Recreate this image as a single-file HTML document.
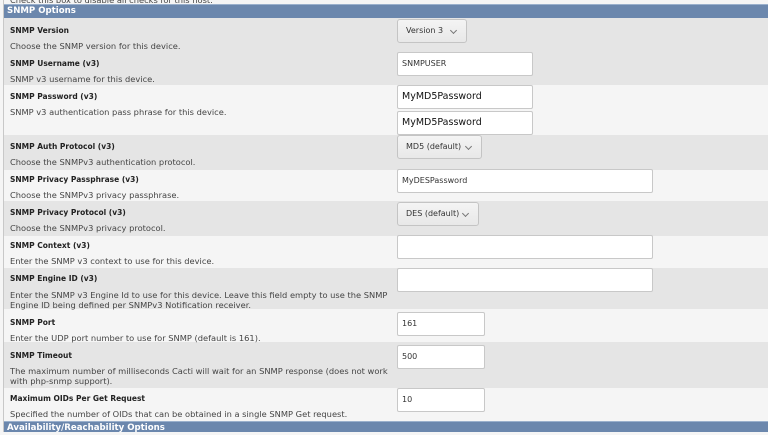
<!DOCTYPE html>
<html><head><meta charset="utf-8"><style>
*{margin:0;padding:0;box-sizing:border-box}
body{width:768px;height:432px;overflow:hidden;background:#f5f5f5;font-family:"DejaVu Sans","Liberation Sans",sans-serif;position:relative}
.lb{position:absolute;left:3px;top:0;width:1px;height:432px;background:#c8c8c8}
.r{position:absolute;left:4px;right:0}
.g{background:#e5e5e5}.w{background:#f5f5f5}
.h{background:#6b87ad;color:#fff;font-weight:bold;font-size:8.6px;padding-left:3px;line-height:13px;border-top:1px solid #9ab0cc}
.t{position:absolute;left:10px;font-size:7.5px;color:#222;white-space:nowrap}
.b{font-weight:bold}
.d{color:#444;line-height:10px;font-size:8.3px}
.i{position:absolute;left:397px;height:24px;background:#fff;border:1px solid #c8c8c8;border-radius:2px;font-size:8px;color:#333;padding-left:4px;line-height:22px}
.s{position:absolute;left:397px;height:24px;background:linear-gradient(#f4f4f4,#e8e8e8);border:1px solid #c4c4c4;border-radius:3px;font-size:8px;color:#333;padding-left:8px;line-height:22px}
.s:after{content:"";position:absolute;right:10px;top:8px;width:4px;height:4px;border-right:1px solid #777;border-bottom:1px solid #777;transform:rotate(45deg)}
.big{font-size:9.5px;color:#111}
</style></head><body>
<div class="t d" style="top:-5px;left:10px">Check this box to disable all checks for this host.</div>
<div class="r h" style="top:4px;height:14px">SNMP Options</div>
<div class="r g" style="top:18px;height:67px"></div>
<div class="r w" style="top:85px;height:50px"></div>
<div class="r g" style="top:135px;height:35px"></div>
<div class="r w" style="top:170px;height:31px"></div>
<div class="r g" style="top:201px;height:35px"></div>
<div class="r w" style="top:236px;height:32px"></div>
<div class="r g" style="top:268px;height:41px"></div>
<div class="r w" style="top:309px;height:33px"></div>
<div class="r g" style="top:342px;height:46px"></div>
<div class="r w" style="top:388px;height:33px"></div>
<div class="r h" style="top:421px;height:11px">Availability/Reachability Options</div>
<div class="lb"></div>

<div class="t b" style="top:26px">SNMP Version</div>
<div class="t d" style="top:41px">Choose the SNMP version for this device.</div>
<div class="t b" style="top:59px">SNMP Username (v3)</div>
<div class="t d" style="top:74px">SNMP v3 username for this device.</div>
<div class="t b" style="top:92px">SNMP Password (v3)</div>
<div class="t d" style="top:107px">SNMP v3 authentication pass phrase for this device.</div>
<div class="t b" style="top:142px">SNMP Auth Protocol (v3)</div>
<div class="t d" style="top:157px">Choose the SNMPv3 authentication protocol.</div>
<div class="t b" style="top:175px">SNMP Privacy Passphrase (v3)</div>
<div class="t d" style="top:190px">Choose the SNMPv3 privacy passphrase.</div>
<div class="t b" style="top:208px">SNMP Privacy Protocol (v3)</div>
<div class="t d" style="top:223px">Choose the SNMPv3 privacy protocol.</div>
<div class="t b" style="top:241px">SNMP Context (v3)</div>
<div class="t d" style="top:256px">Enter the SNMP v3 context to use for this device.</div>
<div class="t b" style="top:274px">SNMP Engine ID (v3)</div>
<div class="t d" style="top:290px">Enter the SNMP v3 Engine Id to use for this device. Leave this field empty to use the SNMP<br>Engine ID being defined per SNMPv3 Notification receiver.</div>
<div class="t b" style="top:318px">SNMP Port</div>
<div class="t d" style="top:333px">Enter the UDP port number to use for SNMP (default is 161).</div>
<div class="t b" style="top:351px">SNMP Timeout</div>
<div class="t d" style="top:366px">The maximum number of milliseconds Cacti will wait for an SNMP response (does not work<br>with php-snmp support).</div>
<div class="t b" style="top:394px">Maximum OIDs Per Get Request</div>
<div class="t d" style="top:409px">Specified the number of OIDs that can be obtained in a single SNMP Get request.</div>

<div class="s" style="top:19px;width:70px">Version 3</div>
<div class="i" style="top:52px;width:136px">SNMPUSER</div>
<div class="i big" style="top:85px;width:136px">MyMD5Password</div>
<div class="i big" style="top:111px;width:136px">MyMD5Password</div>
<div class="s" style="top:135px;width:85px">MD5 (default)</div>
<div class="i" style="top:169px;width:256px">MyDESPassword</div>
<div class="s" style="top:202px;width:82px">DES (default)</div>
<div class="i" style="top:235px;width:256px"></div>
<div class="i" style="top:268px;width:256px"></div>
<div class="i" style="top:312px;width:88px">161</div>
<div class="i" style="top:345px;width:88px">500</div>
<div class="i" style="top:388px;width:88px">10</div>
</body></html>
